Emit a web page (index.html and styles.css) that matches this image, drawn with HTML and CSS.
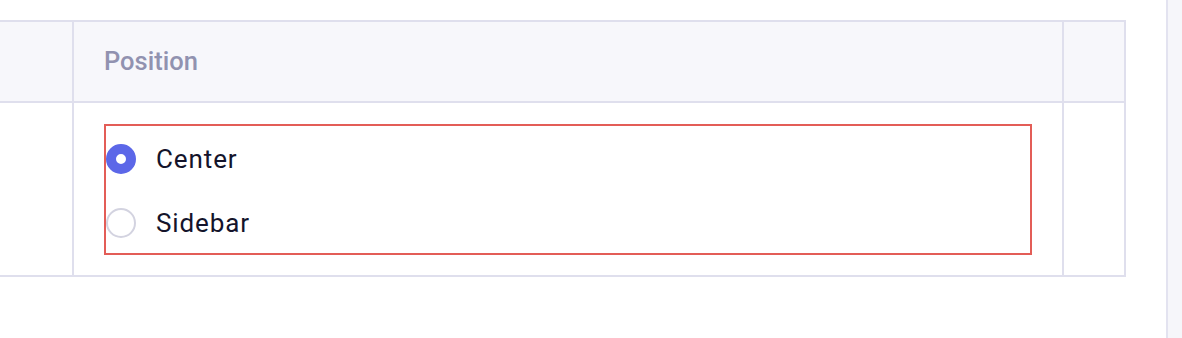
FILE: index.html
```html
<!DOCTYPE html>
<html>
<head>
<meta charset="utf-8">
<link rel="stylesheet" href="styles.css">
</head>
<body>
<div class="page">
  <main class="main">
    <div class="table">
      <div class="cell head"></div>
      <div class="cell head head-label">Position</div>
      <div class="cell head"></div>
      <div class="cell"></div>
      <div class="cell body-cell">
        <div class="radio-group">
          <label class="radio-item">
            <span class="radio checked"></span>
            <span class="radio-label">Center</span>
          </label>
          <label class="radio-item">
            <span class="radio"></span>
            <span class="radio-label">Sidebar</span>
          </label>
        </div>
      </div>
      <div class="cell"></div>
    </div>
  </main>
  <aside class="side"></aside>
</div>
</body>
</html>
```

FILE: styles.css
```css
html, body {
  margin: 0;
  padding: 0;
  background: #ffffff;
}
body {
  font-family: Roboto, "Liberation Sans", sans-serif;
  width: 1182px;
  height: 338px;
  overflow: hidden;
}
.page {
  display: flex;
  height: 338px;
}
.main {
  width: 1166px;
  padding-top: 20px;
  box-sizing: border-box;
}
.side {
  flex: 1;
  border-left: 2px solid #e3e3f0;
  background: #f6f6fa;
}
.table {
  display: grid;
  grid-template-columns: 72px 988px 60px;
  grid-template-rows: 79px 172px;
  gap: 2px;
  width: 1126px;
  background: #dfdfed;
  border: 2px solid #dfdfed;
  border-left: none;
  box-sizing: border-box;
}
.cell {
  background: #ffffff;
}
.head {
  background: #f7f7fb;
}
.head-label {
  display: flex;
  align-items: center;
  padding-left: 30px;
  padding-bottom: 2px;
  font-size: 25.5px;
  font-weight: 500;
  color: #9192b0;
}
.body-cell {
  padding: 21px 0 0 30px;
}
.radio-group {
  width: 928px;
  height: 131px;
  box-sizing: border-box;
  border: 2px solid #e35d57;
  padding: 18px 0 0 0;
  display: flex;
  flex-direction: column;
  gap: 34px;
}
.radio-item {
  display: flex;
  align-items: center;
  height: 30px;
  gap: 20px;
}
.radio {
  width: 30px;
  height: 30px;
  box-sizing: border-box;
  border-radius: 50%;
  border: 2px solid #d3d3e0;
  background: #ffffff;
  flex: none;
}
.radio.checked {
  border: 10px solid #5c67e8;
}
.radio-label {
  font-size: 26px;
  letter-spacing: 0.9px;
  color: #14142b;
  line-height: 30px;
}
```
